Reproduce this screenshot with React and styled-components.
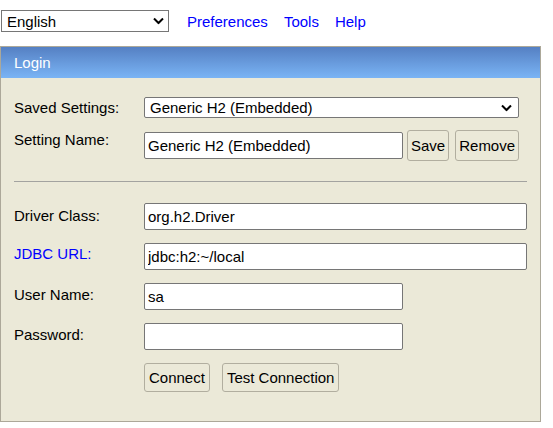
import React from "react";
import styled, { createGlobalStyle } from "styled-components";

const GlobalStyle = createGlobalStyle`
  html, body { margin: 0; padding: 0; background: #ffffff; }
  body { font-family: "Liberation Sans", Arial, sans-serif; font-size: 15px; color: #000; }
`;

const Page = styled.div`
  padding-top: 10px;
`;

const TopBar = styled.div`
  display: flex;
  align-items: center;
  height: 22px;
  padding-left: 1px;
`;

const SelectWrap = styled.div`
  position: relative;
  display: inline-flex;
  width: ${(p) => p.$w}px;
  height: ${(p) => p.$h}px;
`;

const NativeSelect = styled.select`
  appearance: none;
  -webkit-appearance: none;
  box-sizing: border-box;
  width: 100%;
  height: 100%;
  margin: 0;
  padding: 0 20px 0 ${(p) => p.$pl}px;
  font-family: "Liberation Sans", Arial, sans-serif;
  font-size: 15px;
  color: #000;
  background: #fff;
  border: 1px solid #767676;
  border-radius: ${(p) => p.$r}px;
  outline: none;
`;

const Chevron = styled.svg`
  position: absolute;
  right: ${(p) => p.$right}px;
  top: 50%;
  transform: translateY(-50%);
  pointer-events: none;
`;

const Nav = styled.nav`
  display: flex;
  align-items: center;
  gap: 16px;
  margin-left: 18px;
`;

const NavLink = styled.a`
  color: #0000ff;
  text-decoration: none;
  font-size: 15px;
  line-height: 17px;
  cursor: pointer;
`;

const Panel = styled.div`
  margin-top: 14px;
  width: 541px;
  box-sizing: border-box;
  border: 1px solid #aca899;
  background: #ebe9d8;
`;

const PanelHeader = styled.div`
  height: 31px;
  display: flex;
  align-items: center;
  padding-left: 13px;
  color: #ffffff;
  font-size: 15px;
  background: linear-gradient(to bottom, #5580c3, #7ab4f5);
`;

const PanelBody = styled.div`
  padding: 19px 13px 29px 13px;
`;

const Row = styled.div`
  display: flex;
  align-items: flex-start;
  margin-top: ${(p) => p.$gap || 0}px;
  height: ${(p) => p.$h}px;
`;

const Label = styled.div`
  width: 130px;
  flex-shrink: 0;
  padding-top: ${(p) => (p.$offset != null ? p.$offset : 3)}px;
  line-height: 17px;
  font-size: 15px;
  color: ${(p) => (p.$link ? "#0000ff" : "#000")};
`;

const TextInput = styled.input`
  box-sizing: border-box;
  height: 27px;
  width: ${(p) => (p.$w ? `${p.$w}px` : "auto")};
  flex: ${(p) => (p.$w ? "0 0 auto" : "1 1 auto")};
  min-width: 0;
  margin: 0;
  padding: 0 3px;
  border: 1px solid #767676;
  border-radius: 2px;
  background: #fff;
  font-family: "Liberation Sans", Arial, sans-serif;
  font-size: 15px;
  color: #000;
  align-self: center;
`;

const Divider = styled.div`
  margin-top: 20px;
  height: 0;
  border-top: 1px solid #a3a3a0;
`;

const ButtonGroup = styled.div`
  display: flex;
  gap: ${(p) => p.$gap}px;
  margin-left: ${(p) => p.$ml || 0}px;
  height: 100%;
`;

const Button = styled.button`
  box-sizing: border-box;
  height: 100%;
  margin: 0;
  padding: 0 ${(p) => p.$px || 3}px;
  border: 1px solid #b1ae9f;
  border-radius: 3px;
  background: #ebe9d8;
  font-family: "Liberation Sans", Arial, sans-serif;
  font-size: 15px;
  color: #000;
  cursor: pointer;
`;

const Spacer = styled.div`
  width: 130px;
  flex-shrink: 0;
`;

function ChevronIcon({ right }) {
  return (
    <Chevron $right={right} width="11" height="7" viewBox="0 0 11 7">
      <path d="M1 1 L5.5 5.5 L10 1" fill="none" stroke="#000" strokeWidth="2" />
    </Chevron>
  );
}

export default function App() {
  return (
    <>
      <GlobalStyle />
      <Page>
        <TopBar>
          <SelectWrap $w={168} $h={22}>
            <NativeSelect $pl={5} $r={0} defaultValue="en">
              <option value="en">English</option>
            </NativeSelect>
            <ChevronIcon right={5} />
          </SelectWrap>
          <Nav>
            <NavLink>Preferences</NavLink>
            <NavLink>Tools</NavLink>
            <NavLink>Help</NavLink>
          </Nav>
        </TopBar>
        <Panel>
          <PanelHeader>Login</PanelHeader>
          <PanelBody>
            <Row $h={21}>
              <Label $offset={2}>Saved Settings:</Label>
              <SelectWrap $w={375} $h={21}>
                <NativeSelect $pl={5} $r={2} defaultValue="h2e">
                  <option value="h2e">Generic H2 (Embedded)</option>
                </NativeSelect>
                <ChevronIcon right={7} />
              </SelectWrap>
            </Row>
            <Row $h={31} $gap={12}>
              <Label $offset={1}>Setting Name:</Label>
              <TextInput $w={259} defaultValue="Generic H2 (Embedded)" />
              <ButtonGroup $gap={6} $ml={4}>
                <Button>Save</Button>
                <Button>Remove</Button>
              </ButtonGroup>
            </Row>
            <Divider />
            <Row $h={27} $gap={21}>
              <Label $offset={4}>Driver Class:</Label>
              <TextInput defaultValue="org.h2.Driver" />
            </Row>
            <Row $h={27} $gap={13}>
              <Label $link $offset={2}>JDBC URL:</Label>
              <TextInput defaultValue="jdbc:h2:~/local" />
            </Row>
            <Row $h={27} $gap={13}>
              <Label $offset={3}>User Name:</Label>
              <TextInput $w={259} defaultValue="sa" />
            </Row>
            <Row $h={27} $gap={13}>
              <Label $offset={3}>Password:</Label>
              <TextInput $w={259} type="password" defaultValue="" />
            </Row>
            <Row $h={29} $gap={13}>
              <Spacer />
              <ButtonGroup $gap={12}>
                <Button $px={4}>Connect</Button>
                <Button $px={4}>Test Connection</Button>
              </ButtonGroup>
            </Row>
          </PanelBody>
        </Panel>
      </Page>
    </>
  );
}
